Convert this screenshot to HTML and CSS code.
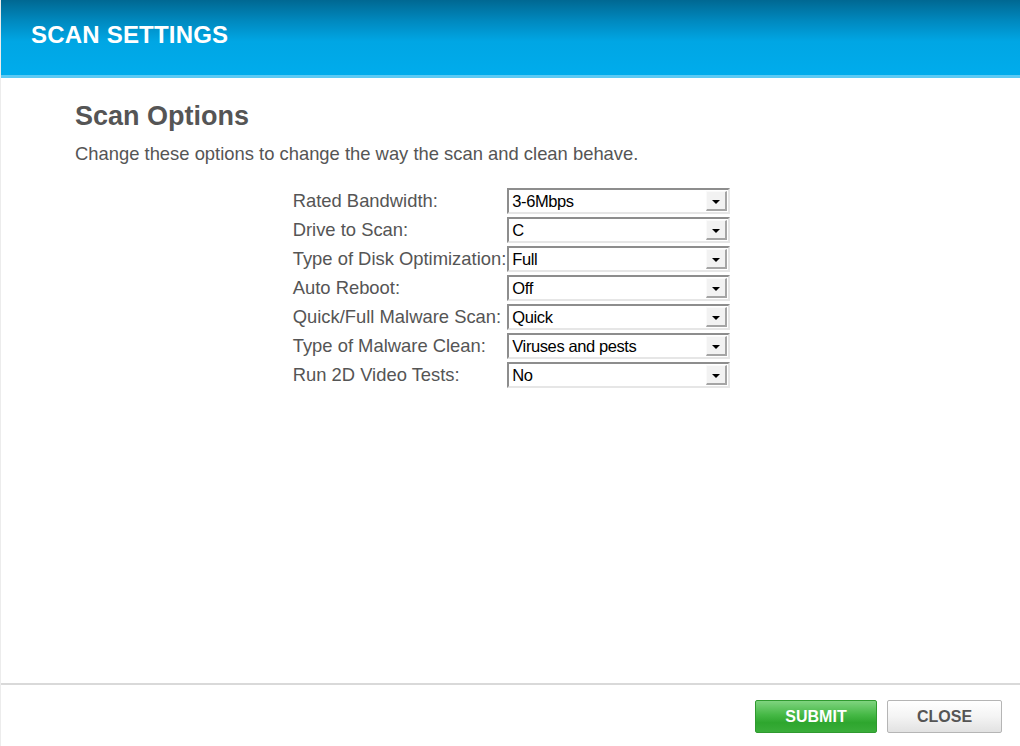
FILE: index.html
```html
<!DOCTYPE html>
<html lang="en">
<head>
  <meta charset="UTF-8">
  <title>Scan Settings</title>
  <link rel="stylesheet" href="styles.css">
</head>
<body>
  <div class="window">
    <div class="header">
      <h1 class="header-title">SCAN SETTINGS</h1>
    </div>

    <div class="content">
      <h2 class="section-title">Scan Options</h2>
      <p class="section-desc">Change these options to change the way the scan and clean behave.</p>

      <div class="options">
        <label class="opt-label">Rated Bandwidth:</label>
        <div class="dropdown"><span class="dd-value">3-6Mbps</span><span class="dd-btn"><i class="dd-arrow"></i></span></div>

        <label class="opt-label">Drive to Scan:</label>
        <div class="dropdown"><span class="dd-value">C</span><span class="dd-btn"><i class="dd-arrow"></i></span></div>

        <label class="opt-label">Type of Disk Optimization:</label>
        <div class="dropdown"><span class="dd-value">Full</span><span class="dd-btn"><i class="dd-arrow"></i></span></div>

        <label class="opt-label">Auto Reboot:</label>
        <div class="dropdown"><span class="dd-value">Off</span><span class="dd-btn"><i class="dd-arrow"></i></span></div>

        <label class="opt-label">Quick/Full Malware Scan:</label>
        <div class="dropdown"><span class="dd-value">Quick</span><span class="dd-btn"><i class="dd-arrow"></i></span></div>

        <label class="opt-label">Type of Malware Clean:</label>
        <div class="dropdown"><span class="dd-value">Viruses and pests</span><span class="dd-btn"><i class="dd-arrow"></i></span></div>

        <label class="opt-label">Run 2D Video Tests:</label>
        <div class="dropdown"><span class="dd-value">No</span><span class="dd-btn"><i class="dd-arrow"></i></span></div>
      </div>
    </div>

    <div class="footer">
      <button class="btn btn-submit">SUBMIT</button>
      <button class="btn btn-close">CLOSE</button>
    </div>
  </div>
</body>
</html>
```

FILE: styles.css
```css
body, html {
  height: 100%;
  margin: 0;
  padding: 0;
  overflow: hidden;
  background: #fff;
}
.window {
  height: 746px;
  display: flex;
  flex-direction: column;
  font-family: 'Liberation Sans', Arial, sans-serif;
  border-left: 1px solid #ececec;
  box-sizing: border-box;
}
.header {
  height: 78px;
  flex: none;
  box-sizing: border-box;
  background: linear-gradient(to bottom, #006892 0%, #0089bf 28%, #00a6e4 55%, #00acec 100%);
  border-bottom: 3px solid #5ccaf4;
  padding: 21px 0 0 30px;
}
.header-title {
  margin: 0;
  color: #fff;
  font-size: 24px;
  font-weight: bold;
  letter-spacing: 0.2px;
}
.content {
  flex: 1;
  padding: 22px 0 0 74px;
}
.section-title {
  margin: 0;
  font-size: 27px;
  font-weight: bold;
  color: #555;
  line-height: 32px;
}
.section-desc {
  margin: 11px 0 0;
  font-size: 18.4px;
  color: #555;
  line-height: 22px;
}
.options {
  display: grid;
  grid-template-columns: auto 223px;
  justify-content: center;
  row-gap: 3px;
  margin: 23px 72px 0 0;
}
.opt-label {
  font-size: 18.4px;
  color: #555;
  line-height: 26px;
  padding-right: 1px;
  white-space: nowrap;
}
.dropdown {
  height: 26px;
  box-sizing: border-box;
  display: flex;
  align-items: center;
  background: #fff;
  border-top: 2px solid #8d8d8d;
  border-left: 2px solid #8d8d8d;
  border-bottom: 2px solid #e6e6e6;
  border-right: 2px solid #e6e6e6;
}
.dd-value {
  flex: 1;
  font-size: 16.5px;
  color: #000;
  padding-left: 3px;
  letter-spacing: -0.4px;
}
.dd-btn {
  width: 21px;
  height: 20px;
  box-sizing: border-box;
  margin-right: 1px;
  background: #f2f2f2;
  border-top: 1px solid #fafafa;
  border-left: 1px solid #fafafa;
  border-bottom: 2px solid #a5a5a5;
  border-right: 2px solid #a5a5a5;
  display: flex;
  align-items: center;
  justify-content: center;
}
.dd-arrow {
  width: 0;
  height: 0;
  border-left: 4px solid transparent;
  border-right: 4px solid transparent;
  border-top: 4px solid #000;
  margin-top: 2px;
}
.footer {
  flex: none;
  height: 63px;
  border-top: 2px solid #d9d9d9;
  display: flex;
  justify-content: flex-end;
  align-items: flex-start;
  gap: 10px;
  padding: 15px 18px 0 0;
  box-sizing: border-box;
}
.btn {
  height: 33px;
  font-family: 'Liberation Sans', Arial, sans-serif;
  font-size: 16px;
  font-weight: bold;
  border-radius: 2px;
  cursor: pointer;
}
.btn-submit {
  width: 122px;
  color: #fff;
  background: linear-gradient(to bottom, #7fd47f 0%, #45b845 45%, #2ea62e 70%, #3aad3a 100%);
  border: 1px solid #2f9a2f;
}
.btn-close {
  width: 115px;
  color: #555;
  background: linear-gradient(to bottom, #ffffff 0%, #f4f4f4 50%, #e2e2e2 100%);
  border: 1px solid #b5b5b5;
}
```
